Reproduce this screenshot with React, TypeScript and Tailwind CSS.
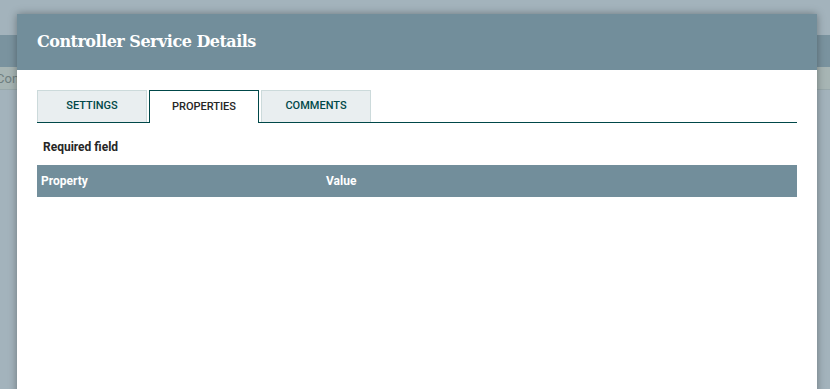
import React from 'react';

const tabs = ['Settings', 'Properties', 'Comments'];

export default function App() {
  const active = 'Properties';
  return (
    <div className="relative w-[830px] h-[389px] overflow-hidden bg-[#a3b3bc] font-['Roboto',sans-serif]">
      {/* page behind the dialog, dimmed */}
      <div className="flex flex-col pt-[35px]">
        <div className="h-[32px] bg-[#7a939f]" />
        <div className="h-[23px] bg-[#a7b5b4] border-b border-[#98a8ab] flex items-center text-[13px] text-[#6f7f80] leading-none">
          <span className="-ml-[4px]">Controller Services</span>
        </div>
      </div>

      {/* dialog */}
      <div className="absolute left-[17px] top-[14px] w-[800px] h-[400px] bg-white shadow-[0_0_8px_rgba(0,0,0,0.35)] flex flex-col">
        <div className="h-[56px] bg-[#728e9b] flex items-center px-[20px]">
          <h2 className="font-['DejaVu_Serif',serif] font-bold text-white text-[16px] tracking-[-0.5px]">
            Controller Service Details
          </h2>
        </div>
        <div className="px-[20px] pt-[20px]">
          <div className="flex gap-[2px] border-b border-[#004849]">
            {tabs.map((t) => {
              const on = t === active;
              return (
                <div
                  key={t}
                  className={
                    on
                      ? 'w-[110px] h-[33px] -mb-px flex items-center justify-center bg-white border border-b-0 border-[#004849] text-[11px] font-medium uppercase text-[#262626]'
                      : 'w-[110px] h-[32px] flex items-center justify-center bg-[#e9eef0] border border-b-0 border-[#ccdadb] text-[11px] font-medium uppercase text-[#004849]'
                  }
                >
                  {t}
                </div>
              );
            })}
          </div>
          <div className="pl-[6px] pt-[15px] h-[42px] text-[12px] font-bold text-[#262626]">
            Required field
          </div>
          <div className="h-[32px] bg-[#728e9b] flex items-center text-[12px] font-bold text-white">
            <div className="w-[289px] pl-[4px]">Property</div>
            <div>Value</div>
          </div>
        </div>
      </div>
    </div>
  );
}
